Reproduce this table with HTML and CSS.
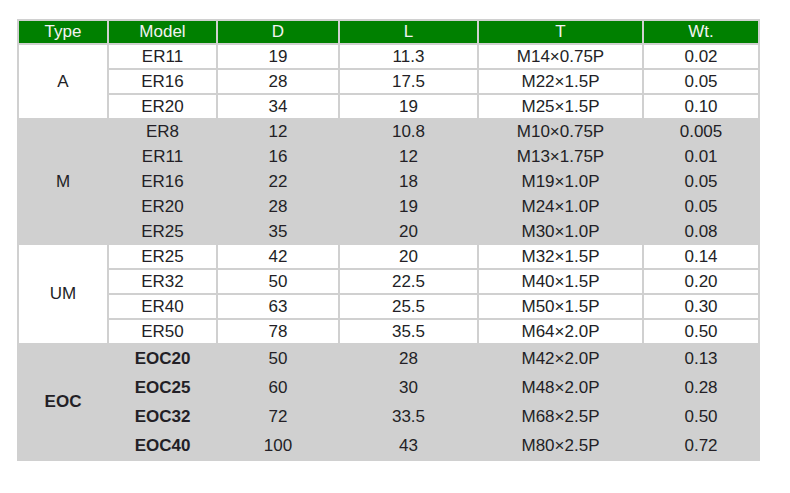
FILE: index.html
```html
<!DOCTYPE html>
<html>
<head>
<meta charset="utf-8">
<link rel="stylesheet" href="styles.css">
</head>
<body>
<table class="spec">
  <colgroup>
    <col class="c-type"><col class="c-model"><col class="c-d"><col class="c-l"><col class="c-t"><col class="c-wt">
  </colgroup>
  <thead>
    <tr class="head"><th>Type</th><th>Model</th><th>D</th><th>L</th><th>T</th><th>Wt.</th></tr>
  </thead>
  <tbody class="white">
    <tr><td rowspan="3">A</td><td>ER11</td><td>19</td><td>11.3</td><td>M14×0.75P</td><td>0.02</td></tr>
    <tr><td>ER16</td><td>28</td><td>17.5</td><td>M22×1.5P</td><td>0.05</td></tr>
    <tr><td>ER20</td><td>34</td><td>19</td><td>M25×1.5P</td><td>0.10</td></tr>
  </tbody>
  <tbody class="gray">
    <tr><td rowspan="5">M</td><td>ER8</td><td>12</td><td>10.8</td><td>M10×0.75P</td><td>0.005</td></tr>
    <tr><td>ER11</td><td>16</td><td>12</td><td>M13×1.75P</td><td>0.01</td></tr>
    <tr><td>ER16</td><td>22</td><td>18</td><td>M19×1.0P</td><td>0.05</td></tr>
    <tr><td>ER20</td><td>28</td><td>19</td><td>M24×1.0P</td><td>0.05</td></tr>
    <tr><td>ER25</td><td>35</td><td>20</td><td>M30×1.0P</td><td>0.08</td></tr>
  </tbody>
  <tbody class="white">
    <tr><td rowspan="4">UM</td><td>ER25</td><td>42</td><td>20</td><td>M32×1.5P</td><td>0.14</td></tr>
    <tr><td>ER32</td><td>50</td><td>22.5</td><td>M40×1.5P</td><td>0.20</td></tr>
    <tr><td>ER40</td><td>63</td><td>25.5</td><td>M50×1.5P</td><td>0.30</td></tr>
    <tr><td>ER50</td><td>78</td><td>35.5</td><td>M64×2.0P</td><td>0.50</td></tr>
  </tbody>
  <tbody class="gray eoc">
    <tr><td rowspan="4" class="b">EOC</td><td class="b">EOC20</td><td>50</td><td>28</td><td>M42×2.0P</td><td>0.13</td></tr>
    <tr><td class="b">EOC25</td><td>60</td><td>30</td><td>M48×2.0P</td><td>0.28</td></tr>
    <tr><td class="b">EOC32</td><td>72</td><td>33.5</td><td>M68×2.5P</td><td>0.50</td></tr>
    <tr><td class="b">EOC40</td><td>100</td><td>43</td><td>M80×2.5P</td><td>0.72</td></tr>
  </tbody>
</table>
</body>
</html>
```

FILE: styles.css
```css
html, body {
  margin: 0;
  background: #ffffff;
}
body {
  padding: 19px 0 0 17px;
  font-family: "Liberation Sans", Arial, sans-serif;
}
.spec {
  border-collapse: separate;
  border-spacing: 2px;
  background: #d0d0d0;
  table-layout: fixed;
  width: 743px;
  font-size: 17px;
  color: #231f26;
}
.c-type { width: 88px; }
.c-model { width: 107px; }
.c-d { width: 120px; }
.c-l { width: 137px; }
.c-t { width: 163px; }
.c-wt { width: 114px; }
.spec th, .spec td {
  padding: 0;
  text-align: center;
  vertical-align: middle;
  line-height: 20px;
}
.head th {
  background: #008000;
  color: #f2f2f2;
  font-weight: normal;
  height: 22px;
}
.white td {
  background: #ffffff;
  height: 23px;
}
.gray td {
  background: #d0d0d0;
  height: 23px;
}
.eoc td {
  height: 27px;
}
.spec .b {
  font-weight: bold;
}
```
